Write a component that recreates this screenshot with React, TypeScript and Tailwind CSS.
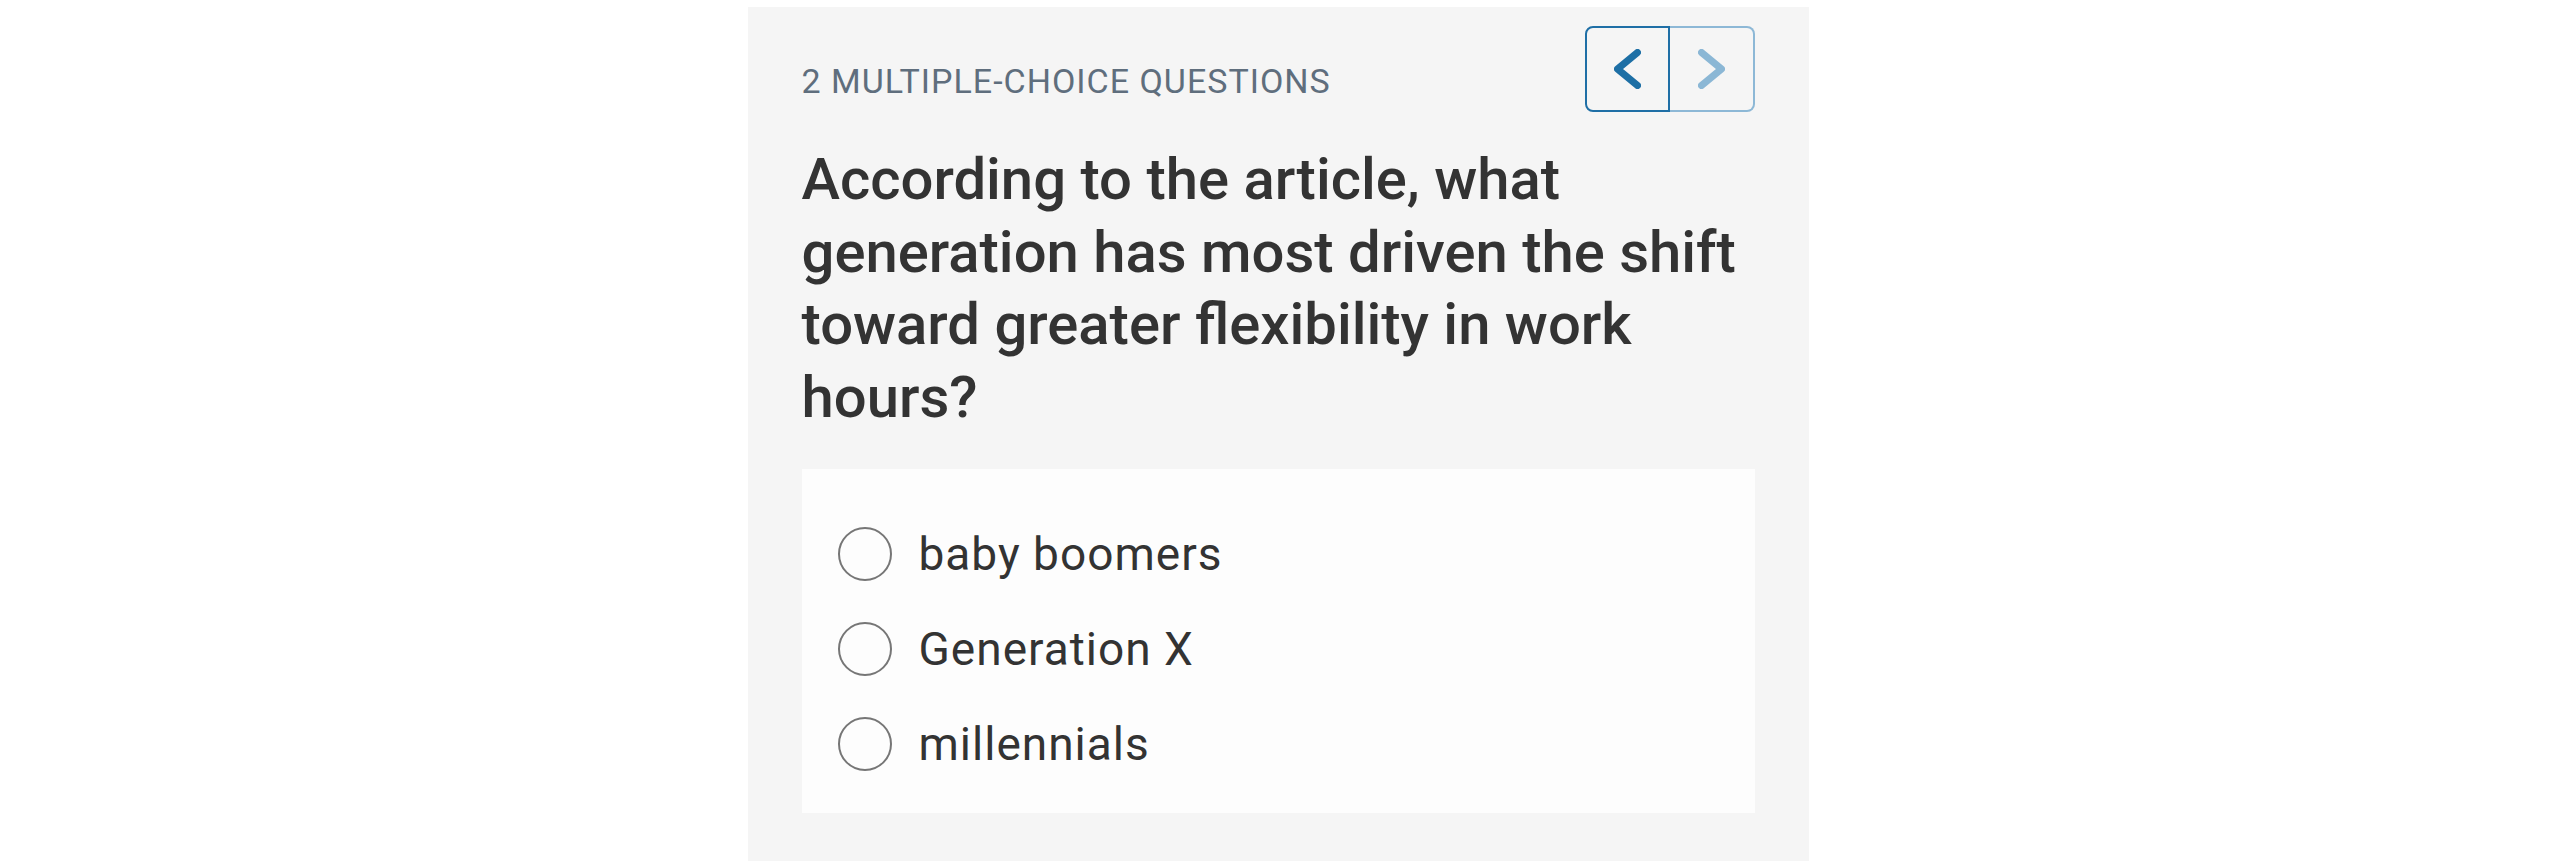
import React from "react";

const options = ["baby boomers", "Generation X", "millennials"];

function Chevron({ dir, color }: { dir: "left" | "right"; color: string }) {
  const pts = dir === "left" ? "23.5,3.5 3.5,20 23.5,36.5" : "3.5,3.5 23.5,20 3.5,36.5";
  return (
    <svg width="27" height="40" viewBox="0 0 27 40" fill="none">
      <polyline points={pts} stroke={color} strokeWidth="7" strokeLinecap="round" strokeLinejoin="round" />
    </svg>
  );
}

export default function App() {
  return (
    <div className="min-h-screen bg-white" style={{ fontFamily: "Roboto, 'Liberation Sans', sans-serif" }}>
      <div className="mx-auto mt-[7px] w-[1061px] bg-[#f5f5f5] px-[54px] pt-[19px] pb-[80px]">
        <div className="flex items-start justify-between">
          <div className="mt-[35px] text-[34px] leading-[40px] text-[#5f6e7d] tracking-[1px]">
            2 MULTIPLE-CHOICE QUESTIONS
          </div>
          <div className="flex">
            <button className="flex h-[86px] w-[85px] items-center justify-center rounded-l-[8px] border-2 border-[#1f6fa6] bg-transparent">
              <Chevron dir="left" color="#1d6fa5" />
            </button>
            <button className="flex h-[86px] w-[85px] items-center justify-center rounded-r-[8px] border-y-2 border-r-2 border-[#8db8d6] bg-transparent">
              <Chevron dir="right" color="#8bb7d5" />
            </button>
          </div>
        </div>
        <h2 className="mt-[31px] text-[58px] font-medium leading-[72.5px] text-[#333333]">
          According to the article, what generation has most driven the shift toward greater flexibility in work hours?
        </h2>
        <div className="mt-[36px] flex flex-col gap-[41px] bg-[#fdfdfd] pl-[36px] pt-[58px] pb-[42px]">
          {options.map((o) => (
            <label key={o} className="flex h-[54px] items-center">
              <span className="h-[54px] w-[54px] shrink-0 rounded-full border-2 border-[#767676]" />
              <span className="ml-[27px] text-[46px] leading-[54px] tracking-[1px] text-[#333333]">{o}</span>
            </label>
          ))}
        </div>
      </div>
    </div>
  );
}
